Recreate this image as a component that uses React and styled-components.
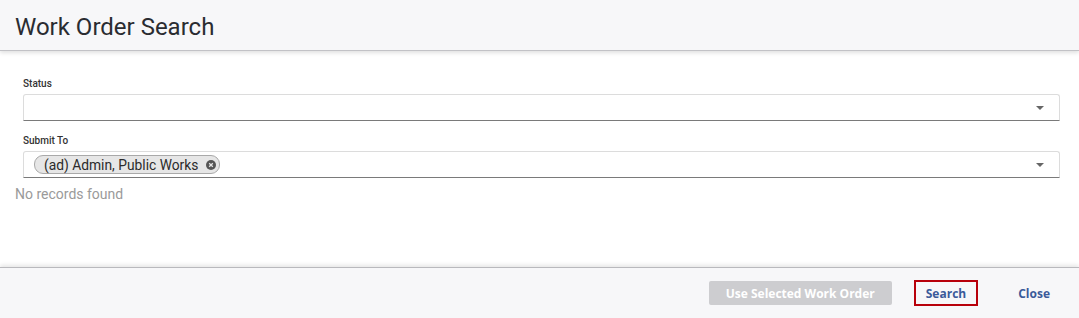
import React from "react";
import styled, { createGlobalStyle } from "styled-components";

const Global = createGlobalStyle`
  html, body { margin: 0; padding: 0; background: #ffffff; }
  body { font-family: Roboto, "Liberation Sans", sans-serif; }
`;

const Dialog = styled.div`
  display: flex;
  flex-direction: column;
  height: 318px;
  width: 1079px;
  overflow: hidden;
  background: #fff;
`;

const Header = styled.div`
  height: 50px;
  background: #f7f7f9;
  border-bottom: 1px solid #c2c2c6;
  box-shadow: 0 2px 4px rgba(0, 0, 0, 0.12);
  display: flex;
  align-items: center;
  padding-left: 15px;
  position: relative;
  z-index: 1;
`;

const Title = styled.h1`
  margin: 0;
  font-family: Roboto, "Liberation Sans", sans-serif;
  font-weight: 400;
  font-size: 24px;
  color: #2a2c31;
  padding-top: 3px;
`;

const Body = styled.div`
  flex: 1;
  padding: 27px 19px 0 0;
`;

const Field = styled.div`
  padding-left: 23px;
  margin-bottom: ${(p) => p.gap || 0}px;
`;

const Label = styled.div`
  font-size: 10px;
  font-weight: 500;
  color: #333;
  line-height: 12px;
  margin-bottom: 4px;
`;

const Select = styled.div`
  height: 25px;
  border: 1px solid #dcdcdc;
  border-bottom: 1px solid #7a7a7a;
  border-radius: 3px 3px 0 0;
  display: flex;
  align-items: center;
  padding: 0 10px;
`;

const Caret = styled.span`
  margin-left: auto;
  width: 0;
  height: 0;
  border-left: 4px solid transparent;
  border-right: 4px solid transparent;
  border-top: 4px solid #666;
  margin-right: 5px;
`;

const Chip = styled.span`
  display: inline-flex;
  align-items: center;
  height: 17px;
  padding: 0 3px 0 9px;
  border: 1px solid #a9a9a9;
  border-radius: 9px;
  background: #e6e6e6;
  font-size: 13.8px;
  color: #2b2b2b;
`;

const ChipX = styled.span`
  display: inline-flex;
  width: 10px;
  height: 10px;
  margin-left: 8px;
`;

const Empty = styled.div`
  padding-left: 15px;
  margin-top: 8px;
  font-size: 14px;
  color: #9a9a9a;
`;

const Footer = styled.div`
  height: 50px;
  background: #f7f7f9;
  border-top: 1px solid #b9b9bd;
  box-shadow: 0 -2px 4px rgba(0, 0, 0, 0.1);
  display: flex;
  align-items: center;
  justify-content: flex-end;
  padding-right: 19px;
`;

const Button = styled.button`
  font-family: "Open Sans", "Liberation Sans", sans-serif;
  font-weight: 700;
  font-size: 12px;
  height: ${(p) => (p.outlined ? 26 : 24)}px;
  padding: 0 ${(p) => p.pad}px;
  margin-left: ${(p) => p.ml}px;
  cursor: pointer;
  background: ${(p) => (p.disabled ? "#cdcdd0" : "transparent")};
  color: ${(p) => (p.disabled ? "#ffffff" : "#3b5a9a")};
  border: ${(p) => (p.outlined ? "2px solid #b8000b" : "none")};
  border-radius: ${(p) => (p.outlined ? 0 : 2)}px;
`;

export default function App() {
  return (
    <>
      <Global />
      <Dialog>
        <Header>
          <Title>Work Order Search</Title>
        </Header>
        <Body>
          <Field gap={14}>
            <Label>Status</Label>
            <Select>
              <Caret />
            </Select>
          </Field>
          <Field>
            <Label>Submit To</Label>
            <Select>
              <Chip>
                (ad) Admin, Public Works
                <ChipX>
                  <svg width="10" height="10" viewBox="0 0 10 10">
                    <circle cx="5" cy="5" r="5" fill="#555" />
                    <path d="M3.2 3.2 L6.8 6.8 M6.8 3.2 L3.2 6.8" stroke="#e6e6e6" strokeWidth="1.3" />
                  </svg>
                </ChipX>
              </Chip>
              <Caret />
            </Select>
          </Field>
          <Empty>No records found</Empty>
        </Body>
        <Footer>
          <Button disabled pad={17} ml={0}>Use Selected Work Order</Button>
          <Button outlined pad={10} ml={22}>Search</Button>
          <Button pad={10} ml={30}>Close</Button>
        </Footer>
      </Dialog>
    </>
  );
}
